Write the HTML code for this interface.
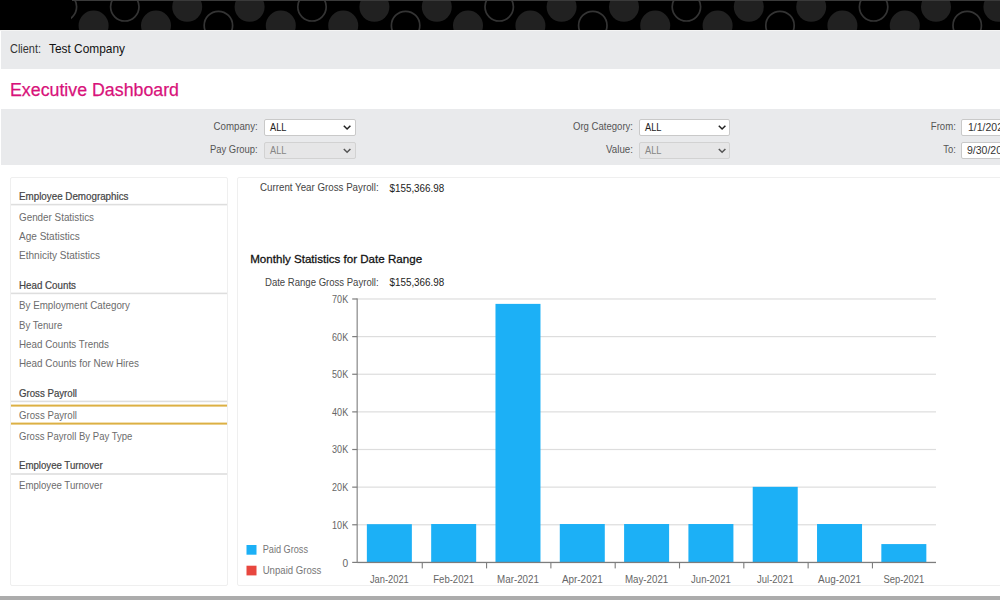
<!DOCTYPE html>
<html><head><meta charset="utf-8">
<style>
html,body{margin:0;padding:0;width:1000px;height:600px;overflow:hidden;background:#fff;font-family:"Liberation Sans",sans-serif;}
.abs{position:absolute;}
svg text{font-family:"Liberation Sans",sans-serif;}
.sel{position:absolute;box-sizing:border-box;border:1px solid #c9c9c9;border-radius:2px;background:#fff;}
.sel.dis{background:#e6e6e7;border-color:#d2d2d2;}
</style></head><body>
<div class="abs" style="left:0;top:0;width:1000px;height:30px;background:#000;overflow:hidden">
<svg width="1000" height="30" style="position:absolute;left:0;top:0">
<circle cx="0.0" cy="6.8" r="15" fill="#212121"/>
<circle cx="31.2" cy="25.5" r="14.2" fill="none" stroke="#343434" stroke-width="1.7"/>
<circle cx="62.4" cy="6.8" r="14.2" fill="none" stroke="#343434" stroke-width="1.7"/>
<circle cx="93.6" cy="25.5" r="15" fill="#212121"/>
<circle cx="124.8" cy="6.8" r="14.2" fill="none" stroke="#343434" stroke-width="1.7"/>
<circle cx="156.0" cy="25.5" r="15" fill="#212121"/>
<circle cx="187.2" cy="6.8" r="15" fill="#212121"/>
<circle cx="218.4" cy="25.5" r="14.2" fill="none" stroke="#343434" stroke-width="1.7"/>
<circle cx="249.6" cy="6.8" r="15" fill="#212121"/>
<circle cx="280.8" cy="25.5" r="15" fill="#212121"/>
<circle cx="312.0" cy="6.8" r="14.2" fill="none" stroke="#343434" stroke-width="1.7"/>
<circle cx="343.2" cy="25.5" r="15" fill="#212121"/>
<circle cx="374.4" cy="6.8" r="15" fill="#212121"/>
<circle cx="405.6" cy="25.5" r="14.2" fill="none" stroke="#343434" stroke-width="1.7"/>
<circle cx="436.8" cy="6.8" r="15" fill="#212121"/>
<circle cx="468.0" cy="25.5" r="15" fill="#212121"/>
<circle cx="499.2" cy="6.8" r="14.2" fill="none" stroke="#343434" stroke-width="1.7"/>
<circle cx="530.4" cy="25.5" r="15" fill="#212121"/>
<circle cx="561.6" cy="6.8" r="15" fill="#212121"/>
<circle cx="592.8" cy="25.5" r="14.2" fill="none" stroke="#343434" stroke-width="1.7"/>
<circle cx="624.0" cy="6.8" r="15" fill="#212121"/>
<circle cx="655.2" cy="25.5" r="15" fill="#212121"/>
<circle cx="686.4" cy="6.8" r="14.2" fill="none" stroke="#343434" stroke-width="1.7"/>
<circle cx="717.6" cy="25.5" r="15" fill="#212121"/>
<circle cx="748.8" cy="6.8" r="15" fill="#212121"/>
<circle cx="780.0" cy="25.5" r="14.2" fill="none" stroke="#343434" stroke-width="1.7"/>
<circle cx="811.2" cy="6.8" r="15" fill="#212121"/>
<circle cx="842.4" cy="25.5" r="15" fill="#212121"/>
<circle cx="873.6" cy="6.8" r="14.2" fill="none" stroke="#343434" stroke-width="1.7"/>
<circle cx="904.8" cy="25.5" r="15" fill="#212121"/>
<circle cx="936.0" cy="6.8" r="15" fill="#212121"/>
<circle cx="967.2" cy="25.5" r="14.2" fill="none" stroke="#343434" stroke-width="1.7"/>
<circle cx="998.4" cy="6.8" r="15" fill="#212121"/>
<circle cx="1029.6" cy="25.5" r="15" fill="#212121"/>
<rect x="72" y="0" width="928" height="1" fill="#3a3a3a"/>
<path d="M0 0 H71 V30 H0 Z" fill="#000"/>
</svg>
</div>
<div class="abs" style="left:0;top:30px;width:1000px;height:1px;background:#f4f4f4"></div>
<div class="abs" style="left:1px;top:31px;width:999px;height:38px;background:#e9eaec"></div>
<div class="abs" style="left:1px;top:109px;width:999px;height:56px;background:#e9eaec"></div>
<div class="sel" style="left:263.5px;top:119px;width:92px;height:16.5px"></div>
<div class="sel dis" style="left:263.5px;top:142.3px;width:92px;height:16.5px"></div>
<div class="sel" style="left:639px;top:119px;width:91px;height:16.5px"></div>
<div class="sel dis" style="left:639px;top:142.3px;width:91px;height:16.5px"></div>
<div class="sel" style="left:961px;top:119px;width:60px;height:16.5px"></div>
<div class="sel" style="left:961px;top:142.3px;width:60px;height:16.5px"></div>
<div class="abs" style="left:10px;top:177px;width:217.5px;height:409px;box-sizing:border-box;border:1px solid #efefef;border-radius:2px"></div>
<div class="abs" style="left:237.2px;top:177px;width:800px;height:409px;box-sizing:border-box;border:1px solid #efefef;border-radius:2px"></div>
<div class="abs" style="left:0;top:596.4px;width:1000px;height:4px;background:#acacac"></div>
<svg class="abs" style="left:0;top:0" width="1000" height="600">
<text x="10" y="53.3" textLength="31" lengthAdjust="spacingAndGlyphs" style="font-size:12.5px;fill:#333;">Client:</text>
<text x="49" y="53.3" textLength="76" lengthAdjust="spacingAndGlyphs" style="font-size:12.8px;fill:#111;">Test Company</text>
<text x="10" y="95.5" textLength="169" lengthAdjust="spacingAndGlyphs" style="font-size:19.1px;stroke:#d8127a;stroke-width:0.25px;fill:#d8127a;">Executive Dashboard</text>
<text x="257.7" y="129.9" text-anchor="end" textLength="44.1" lengthAdjust="spacingAndGlyphs" style="font-size:10.5px;fill:#555;">Company:</text>
<text x="257.7" y="152.6" text-anchor="end" textLength="47.7" lengthAdjust="spacingAndGlyphs" style="font-size:10.5px;fill:#555;">Pay Group:</text>
<text x="633" y="129.9" text-anchor="end" textLength="60" lengthAdjust="spacingAndGlyphs" style="font-size:10.5px;fill:#555;">Org Category:</text>
<text x="633" y="152.6" text-anchor="end" textLength="27" lengthAdjust="spacingAndGlyphs" style="font-size:10.5px;fill:#555;">Value:</text>
<text x="955.8" y="129.9" text-anchor="end" textLength="25" lengthAdjust="spacingAndGlyphs" style="font-size:10.5px;fill:#555;">From:</text>
<text x="955.8" y="152.6" text-anchor="end" textLength="12.5" lengthAdjust="spacingAndGlyphs" style="font-size:10.5px;fill:#555;">To:</text>
<text x="270" y="131" textLength="16.5" lengthAdjust="spacingAndGlyphs" style="font-size:10.2px;fill:#222;">ALL</text>
<text x="270" y="154.2" textLength="16.5" lengthAdjust="spacingAndGlyphs" style="font-size:10.2px;fill:#858585;">ALL</text>
<text x="645" y="131" textLength="16.5" lengthAdjust="spacingAndGlyphs" style="font-size:10.2px;fill:#222;">ALL</text>
<text x="645" y="154.2" textLength="16.5" lengthAdjust="spacingAndGlyphs" style="font-size:10.2px;fill:#858585;">ALL</text>
<text x="968" y="131" style="font-size:10.5px;fill:#333;">1/1/2021</text>
<text x="967" y="154.2" style="font-size:10.5px;fill:#333;">9/30/2021</text>
<path d="M343.8 125.7 l3.3 3.3 l3.3 -3.3" fill="none" stroke="#222" stroke-width="1.5"/>
<path d="M343.8 149 l3.3 3.3 l3.3 -3.3" fill="none" stroke="#555" stroke-width="1.5"/>
<path d="M718.8 125.7 l3.3 3.3 l3.3 -3.3" fill="none" stroke="#222" stroke-width="1.5"/>
<path d="M718.8 149 l3.3 3.3 l3.3 -3.3" fill="none" stroke="#555" stroke-width="1.5"/>
<text x="19" y="200.29999999999998" textLength="109.5" lengthAdjust="spacingAndGlyphs" style="font-size:10.3px;stroke:#444;stroke-width:0.2px;fill:#444;">Employee Demographics</text>
<rect x="11" y="203.8" width="216" height="1.6" fill="#dedede"/>
<text x="19" y="220.79999999999998" textLength="75" lengthAdjust="spacingAndGlyphs" style="font-size:10.2px;fill:#6c6c6c;">Gender Statistics</text>
<text x="19" y="239.6" textLength="60.75" lengthAdjust="spacingAndGlyphs" style="font-size:10.2px;fill:#6c6c6c;">Age Statistics</text>
<text x="19" y="259.1" textLength="81" lengthAdjust="spacingAndGlyphs" style="font-size:10.2px;fill:#6c6c6c;">Ethnicity Statistics</text>
<text x="19" y="288.6" textLength="57" lengthAdjust="spacingAndGlyphs" style="font-size:10.3px;stroke:#444;stroke-width:0.2px;fill:#444;">Head Counts</text>
<rect x="11" y="292.6" width="216" height="1.6" fill="#dedede"/>
<text x="19" y="308.90000000000003" textLength="111" lengthAdjust="spacingAndGlyphs" style="font-size:10.2px;fill:#6c6c6c;">By Employment Category</text>
<text x="19" y="328.6" textLength="43.3" lengthAdjust="spacingAndGlyphs" style="font-size:10.2px;fill:#6c6c6c;">By Tenure</text>
<text x="19" y="347.6" textLength="90" lengthAdjust="spacingAndGlyphs" style="font-size:10.2px;fill:#6c6c6c;">Head Counts Trends</text>
<text x="19" y="367.3" textLength="120" lengthAdjust="spacingAndGlyphs" style="font-size:10.2px;fill:#6c6c6c;">Head Counts for New Hires</text>
<text x="19" y="396.6" textLength="58" lengthAdjust="spacingAndGlyphs" style="font-size:10.3px;stroke:#444;stroke-width:0.2px;fill:#444;">Gross Payroll</text>
<rect x="11" y="400.6" width="216" height="1.6" fill="#dedede"/>
<rect x="11" y="404.6" width="216" height="2" fill="#dcb043"/>
<text x="19" y="418.6" textLength="58" lengthAdjust="spacingAndGlyphs" style="font-size:10.2px;fill:#6c6c6c;">Gross Payroll</text>
<rect x="11" y="422.6" width="216" height="2" fill="#dcb043"/>
<text x="19" y="440.0" textLength="113.4" lengthAdjust="spacingAndGlyphs" style="font-size:10.2px;fill:#6c6c6c;">Gross Payroll By Pay Type</text>
<text x="19" y="469.0" textLength="83.6" lengthAdjust="spacingAndGlyphs" style="font-size:10.3px;stroke:#444;stroke-width:0.2px;fill:#444;">Employee Turnover</text>
<rect x="11" y="473.2" width="216" height="1.6" fill="#dedede"/>
<text x="19" y="488.6" textLength="83.6" lengthAdjust="spacingAndGlyphs" style="font-size:10.2px;fill:#6c6c6c;">Employee Turnover</text>
<text x="378.6" y="191.4" text-anchor="end" textLength="118.5" lengthAdjust="spacingAndGlyphs" style="font-size:10.8px;fill:#444;">Current Year Gross Payroll:</text>
<text x="389.5" y="192.2" textLength="54.7" lengthAdjust="spacingAndGlyphs" style="font-size:10.8px;fill:#222;">$155,366.98</text>
<text x="250.2" y="263.1" textLength="171.9" lengthAdjust="spacingAndGlyphs" style="font-size:11.6px;stroke:#111;stroke-width:0.28px;fill:#111;">Monthly Statistics for Date Range</text>
<text x="378.6" y="285.6" text-anchor="end" textLength="113.6" lengthAdjust="spacingAndGlyphs" style="font-size:10.8px;fill:#444;">Date Range Gross Payroll:</text>
<text x="389.5" y="286.2" textLength="54.7" lengthAdjust="spacingAndGlyphs" style="font-size:10.8px;fill:#222;">$155,366.98</text>
<rect x="357.2" y="524.17" width="578.8" height="1.2" fill="#dddddd"/>
<rect x="357.2" y="486.54" width="578.8" height="1.2" fill="#dddddd"/>
<rect x="357.2" y="448.91" width="578.8" height="1.2" fill="#dddddd"/>
<rect x="357.2" y="411.28" width="578.8" height="1.2" fill="#dddddd"/>
<rect x="357.2" y="373.65" width="578.8" height="1.2" fill="#dddddd"/>
<rect x="357.2" y="336.02" width="578.8" height="1.2" fill="#dddddd"/>
<rect x="357.2" y="298.39" width="578.8" height="1.2" fill="#dddddd"/>
<rect x="352.2" y="561.80" width="5" height="1.2" fill="#7d7d7d"/>
<text x="348.2" y="566.80" text-anchor="end" style="font-size:10.2px;fill:#666;">0</text>
<rect x="352.2" y="524.17" width="5" height="1.2" fill="#7d7d7d"/>
<text x="348.2" y="528.67" text-anchor="end" textLength="16.1" lengthAdjust="spacingAndGlyphs" style="font-size:10.2px;fill:#666;">10K</text>
<rect x="352.2" y="486.54" width="5" height="1.2" fill="#7d7d7d"/>
<text x="348.2" y="491.04" text-anchor="end" textLength="16.1" lengthAdjust="spacingAndGlyphs" style="font-size:10.2px;fill:#666;">20K</text>
<rect x="352.2" y="448.91" width="5" height="1.2" fill="#7d7d7d"/>
<text x="348.2" y="453.41" text-anchor="end" textLength="16.1" lengthAdjust="spacingAndGlyphs" style="font-size:10.2px;fill:#666;">30K</text>
<rect x="352.2" y="411.28" width="5" height="1.2" fill="#7d7d7d"/>
<text x="348.2" y="415.78" text-anchor="end" textLength="16.1" lengthAdjust="spacingAndGlyphs" style="font-size:10.2px;fill:#666;">40K</text>
<rect x="352.2" y="373.65" width="5" height="1.2" fill="#7d7d7d"/>
<text x="348.2" y="378.15" text-anchor="end" textLength="16.1" lengthAdjust="spacingAndGlyphs" style="font-size:10.2px;fill:#666;">50K</text>
<rect x="352.2" y="336.02" width="5" height="1.2" fill="#7d7d7d"/>
<text x="348.2" y="340.52" text-anchor="end" textLength="16.1" lengthAdjust="spacingAndGlyphs" style="font-size:10.2px;fill:#666;">60K</text>
<rect x="352.2" y="298.39" width="5" height="1.2" fill="#7d7d7d"/>
<text x="348.2" y="302.89" text-anchor="end" textLength="16.1" lengthAdjust="spacingAndGlyphs" style="font-size:10.2px;fill:#666;">70K</text>
<rect x="366.86" y="524.17" width="45" height="38.23" fill="#1cb0f6"/>
<text x="389.36" y="582.8" text-anchor="middle" textLength="38.9" lengthAdjust="spacingAndGlyphs" style="font-size:10.1px;fill:#666;">Jan-2021</text>
<rect x="431.17" y="524.02" width="45" height="38.38" fill="#1cb0f6"/>
<text x="453.67" y="582.8" text-anchor="middle" textLength="40.8" lengthAdjust="spacingAndGlyphs" style="font-size:10.1px;fill:#666;">Feb-2021</text>
<rect x="495.48" y="303.88" width="45" height="258.52" fill="#1cb0f6"/>
<text x="517.98" y="582.8" text-anchor="middle" textLength="41.8" lengthAdjust="spacingAndGlyphs" style="font-size:10.1px;fill:#666;">Mar-2021</text>
<rect x="559.79" y="524.02" width="45" height="38.38" fill="#1cb0f6"/>
<text x="582.29" y="582.8" text-anchor="middle" textLength="40.7" lengthAdjust="spacingAndGlyphs" style="font-size:10.1px;fill:#666;">Apr-2021</text>
<rect x="624.10" y="524.02" width="45" height="38.38" fill="#1cb0f6"/>
<text x="646.60" y="582.8" text-anchor="middle" textLength="43.3" lengthAdjust="spacingAndGlyphs" style="font-size:10.1px;fill:#666;">May-2021</text>
<rect x="688.41" y="524.02" width="45" height="38.38" fill="#1cb0f6"/>
<text x="710.91" y="582.8" text-anchor="middle" textLength="39.6" lengthAdjust="spacingAndGlyphs" style="font-size:10.1px;fill:#666;">Jun-2021</text>
<rect x="752.72" y="486.84" width="45" height="75.56" fill="#1cb0f6"/>
<text x="775.22" y="582.8" text-anchor="middle" textLength="36.4" lengthAdjust="spacingAndGlyphs" style="font-size:10.1px;fill:#666;">Jul-2021</text>
<rect x="817.03" y="524.02" width="45" height="38.38" fill="#1cb0f6"/>
<text x="839.53" y="582.8" text-anchor="middle" textLength="43" lengthAdjust="spacingAndGlyphs" style="font-size:10.1px;fill:#666;">Aug-2021</text>
<rect x="881.34" y="544.07" width="45" height="18.33" fill="#1cb0f6"/>
<text x="903.84" y="582.8" text-anchor="middle" textLength="40.8" lengthAdjust="spacingAndGlyphs" style="font-size:10.1px;fill:#666;">Sep-2021</text>
<rect x="421.71" y="562.4" width="1.1" height="6" fill="#7d7d7d"/>
<rect x="486.02" y="562.4" width="1.1" height="6" fill="#7d7d7d"/>
<rect x="550.33" y="562.4" width="1.1" height="6" fill="#7d7d7d"/>
<rect x="614.64" y="562.4" width="1.1" height="6" fill="#7d7d7d"/>
<rect x="678.96" y="562.4" width="1.1" height="6" fill="#7d7d7d"/>
<rect x="743.27" y="562.4" width="1.1" height="6" fill="#7d7d7d"/>
<rect x="807.58" y="562.4" width="1.1" height="6" fill="#7d7d7d"/>
<rect x="871.89" y="562.4" width="1.1" height="6" fill="#7d7d7d"/>
<rect x="356.59999999999997" y="298.4" width="1.1" height="264.60" fill="#7d7d7d"/>
<rect x="357.2" y="561.8" width="578.8" height="1.3" fill="#7d7d7d"/>
<rect x="246.5" y="545" width="10" height="9.7" fill="#1cb0f6"/>
<rect x="246.5" y="565.7" width="10" height="9.7" fill="#e8473f"/>
<text x="262.7" y="553" textLength="45.3" lengthAdjust="spacingAndGlyphs" style="font-size:10.3px;fill:#777;">Paid Gross</text>
<text x="262.7" y="574" textLength="58.7" lengthAdjust="spacingAndGlyphs" style="font-size:10.3px;fill:#777;">Unpaid Gross</text>
</svg>
</body></html>
